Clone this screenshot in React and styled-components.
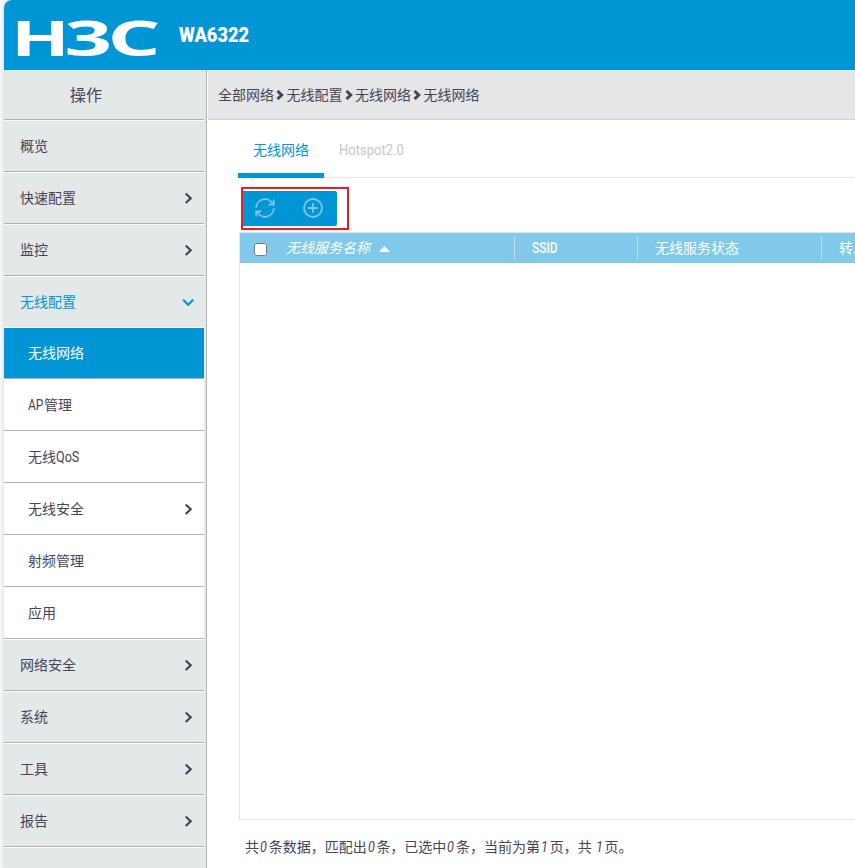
import React from 'react';
import styled, { createGlobalStyle } from 'styled-components';

const BLUE = '#0096d6';
const INK = '#45455a';

const Global = createGlobalStyle`
  * { box-sizing: border-box; }
  body {
    margin: 0;
    overflow: hidden;
    background: #f8f8f8;
    color: ${INK};
    font: 14px/20px "Noto Sans CJK SC", sans-serif;
    font-weight: 400;
  }
`;

const Page = styled.div`
  width: 851px;
  height: 868px;
  margin-left: 4px;
  display: flex;
  flex-direction: column;
  background: #fff;
  border-top-left-radius: 8px;
  box-shadow: 0 0 4px #d0d0d0;
  overflow: hidden;
`;

const Header = styled.header`
  height: 70px;
  flex: none;
  display: flex;
  align-items: flex-start;
  background: ${BLUE};
  color: #fff;
`;

const LogoMark = styled.svg`
  width: 157px;
  height: 70px;
  fill: #fff;
  overflow: visible;
  font-family: "Open Sans", sans-serif;
  font-weight: 700;
  font-size: 49px;
`;

const Narrow = styled.span`
  display: inline-block;
  width: ${(p) => p.$w}px;
  white-space: pre;
  font-family: Roboto, sans-serif;
  font-weight: ${(p) => p.$weight || 400};
  font-size: ${(p) => p.$size || 14}px;
  font-style: ${(p) => (p.$italic ? 'italic' : 'normal')};
  transform: scaleX(${(p) => p.$scale || 0.82});
  transform-origin: 0 50%;
`;

const Model = styled.div`
  margin: 24px 0 0 18px;
  line-height: 22px;
`;

const Main = styled.div`
  flex: 1;
  min-height: 0;
  display: flex;
`;

const Sidebar = styled.nav`
  width: 203px;
  flex: none;
  padding-right: 2px;
  background: #e3e8e8;
  border-right: 1px solid #b3b3b6;
`;

const SideTitle = styled.div`
  width: 200px;
  height: 50px;
  padding-left: 66px;
  font-size: 16px;
  line-height: 48px;
  border-bottom: 1px solid #b1b1b4;
`;

const MenuItem = styled.div`
  width: 200px;
  height: 52px;
  display: flex;
  align-items: center;
  justify-content: space-between;
  padding: 0 10px 2px 16px;
  background: #e3e8e8;
  border-top: 1px solid #fff;
  border-bottom: 1px solid ${(p) => (p.$open ? '#fff' : '#b1b1b4')};
  color: ${(p) => (p.$open ? BLUE : INK)};
`;

const SubItem = styled.div`
  width: 200px;
  height: ${(p) => (p.$active ? 51 : 52)}px;
  display: flex;
  align-items: center;
  justify-content: space-between;
  padding: 0 10px ${(p) => (p.$mixed ? 0 : 2)}px 24px;
  background: ${(p) => (p.$active ? BLUE : '#fff')};
  color: ${(p) => (p.$active ? '#fff' : INK)};
  border-bottom: 1px solid #b1b1b4;
`;

const Arrow = styled.svg`
  width: 10px;
  height: 12px;
  margin-top: 2px;
  flex: none;
  fill: none;
  stroke: currentColor;
  stroke-width: 2.2;
  overflow: visible;
`;

const Content = styled.main`
  flex: 1;
  min-width: 0;
  overflow: hidden;
  margin-left: 1px;
`;

const Crumbs = styled.div`
  height: 50px;
  display: flex;
  align-items: center;
  gap: 2px;
  padding: 0 0 2px 10px;
  background: #e5e6e8;
  border-bottom: 1px solid #d2d2d4;
`;

const CrumbArrow = styled.svg`
  width: 8.5px;
  height: 10px;
  margin-top: 2px;
  fill: none;
  stroke: ${INK};
  stroke-width: 3;
`;

const Tabs = styled.div`
  height: 58px;
  margin-left: 30px;
  display: flex;
  border-bottom: 1px solid #e3e3e3;
`;

const Tab = styled.div`
  height: 58px;
  padding: 19px 15px 0;
  color: ${(p) => (p.$active ? BLUE : '#c6c6c8')};
  border-bottom: ${(p) => (p.$active ? `5px solid ${BLUE}` : '0')};
`;

const Highlight = styled.div`
  width: 108px;
  height: 43px;
  margin: 9px 0 2px 33px;
  padding-top: 2px;
  border: 2px solid #ed1c24;
`;

const Toolbar = styled.div`
  width: 94px;
  height: 35px;
  display: flex;
  align-items: center;
  gap: 28px;
  padding: 0 0 1px 12px;
  background: ${BLUE};
  border-radius: 0 2px 2px 0;
`;

const ToolIcon = styled.svg`
  width: 20px;
  height: 20px;
  fill: none;
  stroke: #7fc4e2;
  stroke-width: 1.8;
`;

const Table = styled.section`
  height: 588px;
  margin-left: 31px;
  border: 1px solid #e3e3e3;
  border-right: 0;
`;

const HeadRow = styled.div`
  height: 30px;
  display: grid;
  grid-template-columns: 275px 123px 184px 1fr;
  align-items: center;
  background: #80c9ea;
  color: #fff;
  overflow: hidden;
`;

const HeadCell = styled.div`
  height: 24px;
  padding: 0 0 ${(p) => (p.$latin ? 0 : 2)}px ${(p) => (p.$first ? 14 : 17)}px;
  display: flex;
  align-items: center;
  white-space: nowrap;
  border-right: 1px solid #c9dbe4;
`;

const Check = styled.input`
  width: 13px;
  height: 13px;
  margin: 5px 19px 0 0;
`;

const Sorted = styled.span`
  font-style: italic;
`;

const SortMark = styled.svg`
  width: 11px;
  height: 6px;
  margin: 4px 0 0 9px;
  fill: #fff;
`;

const Summary = styled.div`
  margin: 16px 0 0 37px;
  white-space: nowrap;
`;

const Num = styled(Narrow)`
  margin: 0 1px;
`;

const menuTop = [
  { label: '概览' },
  { label: '快速配置', more: true },
  { label: '监控', more: true },
];
const menuBottom = ['网络安全', '系统', '工具', '报告'];

function Right() {
  return <Arrow viewBox="0 0 10 12"><path d="M1.7 1.5 6.7 6.2 1.7 11" /></Arrow>;
}

function Down() {
  return <Arrow viewBox="0 0 10 12"><path d="M-.8 3.8 4.2 8.8 9.2 3.8" /></Arrow>;
}

function Logo() {
  return (
    <LogoMark viewBox="0 0 157 70" aria-label="H3C">
      <text transform="translate(7 56) scale(1.57 1)">H</text>
      <text transform="translate(60.5 56) scale(1.7 1)">3</text>
      <text transform="translate(103.5 56) scale(1.7 1)">C</text>
    </LogoMark>
  );
}

function Count({ children }) {
  return <Num $w={7.7} $italic $scale={0.9}>{children}</Num>;
}

export default function App() {
  const crumbs = ['全部网络', '无线配置', '无线网络', '无线网络'];
  return (
    <>
      <Global />
      <Page>
        <Header>
          <Logo />
          <Model><Narrow $w={72} $size={20} $weight={900} $scale={0.91}>WA6322</Narrow></Model>
        </Header>
        <Main>
          <Sidebar>
            <SideTitle>操作</SideTitle>
            {menuTop.map((m) => (
              <MenuItem key={m.label}>{m.label}{m.more && <Right />}</MenuItem>
            ))}
            <MenuItem $open>无线配置<Down /></MenuItem>
            <SubItem $active>无线网络</SubItem>
            <SubItem $mixed><span><Narrow $w={16} $scale={0.86}>AP</Narrow>管理</span></SubItem>
            <SubItem $mixed><span>无线<Narrow $w={24} $scale={0.9}>QoS</Narrow></span></SubItem>
            <SubItem>无线安全<Right /></SubItem>
            <SubItem>射频管理</SubItem>
            <SubItem>应用</SubItem>
            {menuBottom.map((m) => <MenuItem key={m}>{m}<Right /></MenuItem>)}
            <MenuItem />
          </Sidebar>
          <Content>
            <Crumbs>
              {crumbs.map((c, i) => (
                <React.Fragment key={i}>
                  {i > 0 && <CrumbArrow viewBox="0 0 8.5 10"><path d="M1.5 1 5.7 5 1.5 9" /></CrumbArrow>}
                  <span>{c}</span>
                </React.Fragment>
              ))}
            </Crumbs>
            <Tabs>
              <Tab $active>无线网络</Tab>
              <Tab><Narrow $w={66} $scale={0.93}>Hotspot2.0</Narrow></Tab>
            </Tabs>
            <Highlight>
              <Toolbar>
                <ToolIcon viewBox="0 0 20 20">
                  <path d="M1.2 9.8A8.8 8.8 0 0 1 17.8 6M18.8 1.5V6.6H13.5M18.8 10.2A8.8 8.8 0 0 1 2.2 14M1.2 18.5V13.4H6.5" />
                </ToolIcon>
                <ToolIcon viewBox="0 0 20 20">
                  <circle cx="10" cy="10" r="9" />
                  <path d="M10 5V15M5 10H15" />
                </ToolIcon>
              </Toolbar>
            </Highlight>
            <Table>
              <HeadRow>
                <HeadCell $first>
                  <Check type="checkbox" aria-label="全选" />
                  <Sorted>无线服务名称</Sorted>
                  <SortMark viewBox="0 0 11 6"><path d="M5.5 0 11 6H0Z" /></SortMark>
                </HeadCell>
                <HeadCell $latin><Narrow $w={28} $weight={500} $scale={0.85}>SSID</Narrow></HeadCell>
                <HeadCell>无线服务状态</HeadCell>
                <HeadCell>转发</HeadCell>
              </HeadRow>
            </Table>
            <Summary>
              共<Count>0</Count>条数据，匹配出<Count>0</Count>条，已选中<Count>0</Count>条，当前为第<Count>1</Count>页，共 <Count>1</Count>页。
            </Summary>
          </Content>
        </Main>
      </Page>
    </>
  );
}
